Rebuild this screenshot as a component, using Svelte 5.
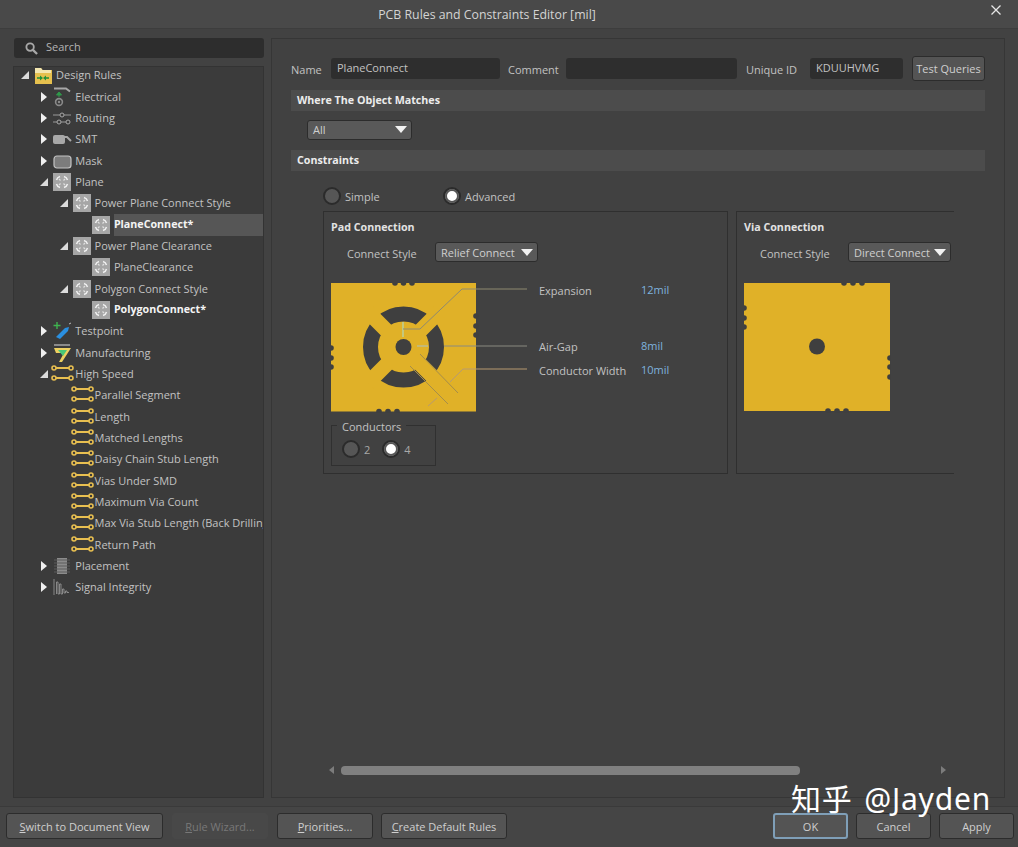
<script>
  const rows = [
    { d: 0, label: 'Design Rules', icon: 'folder', open: true },
    { d: 1, label: 'Electrical', icon: 'electrical', open: false },
    { d: 1, label: 'Routing', icon: 'routing', open: false },
    { d: 1, label: 'SMT', icon: 'smt', open: false },
    { d: 1, label: 'Mask', icon: 'mask', open: false },
    { d: 1, label: 'Plane', icon: 'plane', open: true },
    { d: 2, label: 'Power Plane Connect Style', icon: 'plane', open: true },
    { d: 3, label: 'PlaneConnect*', icon: 'plane', bold: true, selected: true },
    { d: 2, label: 'Power Plane Clearance', icon: 'plane', open: true },
    { d: 3, label: 'PlaneClearance', icon: 'plane' },
    { d: 2, label: 'Polygon Connect Style', icon: 'plane', open: true },
    { d: 3, label: 'PolygonConnect*', icon: 'plane', bold: true },
    { d: 1, label: 'Testpoint', icon: 'testpoint', open: false },
    { d: 1, label: 'Manufacturing', icon: 'manufacturing', open: false },
    { d: 1, label: 'High Speed', icon: 'bus', open: true },
    { d: 2, label: 'Parallel Segment', icon: 'bus' },
    { d: 2, label: 'Length', icon: 'bus' },
    { d: 2, label: 'Matched Lengths', icon: 'bus' },
    { d: 2, label: 'Daisy Chain Stub Length', icon: 'bus' },
    { d: 2, label: 'Vias Under SMD', icon: 'bus' },
    { d: 2, label: 'Maximum Via Count', icon: 'bus' },
    { d: 2, label: 'Max Via Stub Length (Back Drilling)', icon: 'bus' },
    { d: 2, label: 'Return Path', icon: 'bus' },
    { d: 1, label: 'Placement', icon: 'placement', open: false },
    { d: 1, label: 'Signal Integrity', icon: 'signal', open: false }
  ];

  const padNotches = [
    [395, 283], [403.5, 283], [412, 283],
    [379, 411.5], [388, 411.5], [397, 411.5],
    [331, 348], [331, 358], [331, 367],
    [476, 316], [476, 326], [476, 335]
  ];
  const viaNotches = [
    [844, 283], [853, 283], [862, 283],
    [828, 411], [837, 411], [846, 411],
    [744, 308], [744, 318], [744, 327],
    [890, 358], [890, 367], [890, 377]
  ];
</script>

{#snippet icon(name)}
  <svg class="icon" viewBox="0 0 18 18" width="18" height="18">
    {#if name === 'folder'}
      <path d="M1 2h6l1.500 2H18v14H1z" fill="#e6c04e" />
      <path d="M1 2h6l1.500 2H17v3H1z" fill="#f3e6b0" />
      <path d="M3 12h4M15 12h-4" stroke="#1f8f3a" stroke-width="1.600" />
      <path d="M9 12l-3-2.500v5zM9 12l3-2.500v5z" fill="#1f8f3a" />
    {:else if name === 'electrical'}
      <path d="M1 0.500h12l4 3" fill="none" stroke="#a8a8a8" stroke-width="2" />
      <path d="M6 9V6M3.500 7l2.500-3 2.500 3z" fill="#2f9a4a" stroke="#2f9a4a" />
      <circle cx="6" cy="14" r="3.400" fill="none" stroke="#8a8a8a" stroke-width="1.600" />
      <circle cx="6" cy="14" r="1.200" fill="#8a8a8a" />
    {:else if name === 'routing'}
      <path d="M0 6h7M11 6h7M0 13h4M8 13h5" stroke="#9a9a9a" stroke-width="1" />
      <circle cx="9" cy="6" r="2" fill="none" stroke="#a8a8a8" />
      <circle cx="6" cy="13" r="2" fill="none" stroke="#a8a8a8" />
      <circle cx="15" cy="13" r="2" fill="none" stroke="#a8a8a8" />
    {:else if name === 'smt'}
      <rect x="0" y="5" width="12" height="9" rx="2" fill="#a8a8a8" />
      <path d="M11 7h3l4 4" fill="none" stroke="#a8a8a8" stroke-width="2" />
    {:else if name === 'mask'}
      <rect x="1" y="4" width="17" height="12" rx="3" fill="#7c7c7c" stroke="#c4c4c4" stroke-width="1.200" />
    {:else if name === 'plane'}
      <rect width="18" height="18" fill="#a6a6a6" />
      <path d="M7 3.500a5 5 0 0 0-3.500 3.500M11 3.500a5 5 0 0 1 3.500 3.500M3.500 11a5 5 0 0 0 3.500 3.500M14.500 11a5 5 0 0 1-3.500 3.500" fill="none" stroke="#f0f0f0" stroke-width="1.500" />
      <path d="M7.500 7.500l-1.500-1.500M10.500 7.500l1.500-1.500M7.500 10.500l-1.500 1.500M10.500 10.500l1.500 1.500" stroke="#e0e0e0" stroke-width="1.200" />
    {:else if name === 'testpoint'}
      <path d="M3 15l9-9 4-1-1 4-8 8z" fill="#2a8fe0" />
      <path d="M4 0v7M0.500 3.500h7" stroke="#3fb34f" stroke-width="1.400" />
      <path d="M16 2l2-1" stroke="#bbb" />
    {:else if name === 'manufacturing'}
      <path d="M1 1h16" stroke="#8a8a8a" stroke-width="2" />
      <path d="M1 4h17l-9 14H6l5-9H3z" fill="#edd060" />
      <path d="M5 6h9l-4 6z" fill="#48c878" />
    {:else if name === 'bus'}
      <path d="M1 3h17M1 13h17" stroke="#e8bf50" stroke-width="2" />
      <circle cx="1" cy="3" r="2" fill="#3b3b3b" stroke="#e8bf50" stroke-width="1.600" />
      <circle cx="18" cy="3" r="2" fill="#3b3b3b" stroke="#e8bf50" stroke-width="1.600" />
      <circle cx="1" cy="13" r="2" fill="#3b3b3b" stroke="#e8bf50" stroke-width="1.600" />
      <circle cx="18" cy="13" r="2" fill="#3b3b3b" stroke="#e8bf50" stroke-width="1.600" />
    {:else if name === 'placement'}
      <rect x="4" y="1" width="10" height="16" fill="#8c8c8c" />
      <path d="M1 3h16M1 6h16M1 9h16M1 12h16M1 15h16" stroke="#5c5c5c" stroke-width="1" />
    {:else if name === 'signal'}
      <path d="M1 1v16M3.500 16V4h1.500v12h1.500V6h1.500v10h1.500v-5h1.500v4h1.500v-2h1.500v1.500h2" fill="none" stroke="#9c9c9c" stroke-width="0.800" />
    {/if}
  </svg>
{/snippet}

{#snippet radio(on)}
  <span class="radio" class:on></span>
{/snippet}

{#snippet caret()}
  <svg class="caret" viewBox="0 0 12 7" width="12" height="7"><path d="M0 0h12L6 7z" fill="#f2f2f2" /></svg>
{/snippet}

<div class="dialog">
  <header class="title">
    <span>PCB Rules and Constraints Editor [mil]</span>
    <svg class="close" viewBox="0 0 10 10" width="10" height="10"><path d="M0.500 0.500l9 9M9.500 0.500l-9 9" stroke="#e6e6e6" stroke-width="1.300" /></svg>
  </header>

  <div class="main">
    <aside class="left">
      <div class="search">
        <svg viewBox="0 0 14 14" width="13" height="13"><circle cx="5.500" cy="5.500" r="4" fill="none" stroke="#a8a8a8" stroke-width="2" /><path d="M8.500 8.500l4.500 4.500" stroke="#a8a8a8" stroke-width="2.400" /></svg>
        <span>Search</span>
      </div>
      <div class="tree">
        {#each rows as row}
          <div class="row" style="padding-left: {row.d * 19.3 + 2}px">
            <span class="arrow">
              {#if row.open === true}
                <svg viewBox="0 0 8 8" width="8" height="8"><path d="M8 0v8H0z" fill="#dcdcdc" /></svg>
              {:else if row.open === false}
                <svg viewBox="0 0 6 10" width="6" height="10"><path d="M0 0l6 5-6 5z" fill="#efefef" /></svg>
              {/if}
            </span>
            {@render icon(row.icon)}
            <span class="label" class:bold={row.bold} class:selected={row.selected}>{row.label}</span>
          </div>
        {/each}
      </div>
    </aside>

    <section class="right">
      <div class="form-row">
        <span class="lbl name">Name</span>
        <span class="input w-name">PlaneConnect</span>
        <span class="lbl comment">Comment</span>
        <span class="input w-comment"></span>
        <span class="lbl uid">Unique ID</span>
        <span class="input w-uid">KDUUHVMG</span>
        <button class="btn test">Test Queries</button>
      </div>

      <h3 class="section first">Where The Object Matches</h3>
      <div class="select all">All {@render caret()}</div>
      <h3 class="section second">Constraints</h3>

      <div class="mode">
        <label class="simple">{@render radio(false)} Simple</label>
        <label>{@render radio(true)} Advanced</label>
      </div>

      <div class="viewport">
        <div class="panels">
          <div class="panel pad">
            <h4>Pad Connection</h4>
            <div class="style-row">
              <span>Connect Style</span>
              <div class="select style">Relief Connect {@render caret()}</div>
            </div>
            <div class="diagram">
              <svg viewBox="331 283 200 130" width="200" height="130">
                <rect x="331" y="283" width="145" height="128.500" fill="#e0b128" />
                {#each padNotches as [cx, cy]}
                  <circle {cx} {cy} r="2.800" fill="#3f3f3f" />
                {/each}
                <circle cx="403.500" cy="347" r="33" fill="none" stroke="#3f3f3f" stroke-width="15" />
                <path d="M368 312l71 71M439 312l-71 71" stroke="#e0b128" stroke-width="15" />
                <circle cx="403.500" cy="347" r="8" fill="#3f3f3f" />
                <path d="M420 354l38 39M410 366l38 38" stroke="#a58d4a" stroke-width="1" fill="none" />
                <path d="M403 322v15" stroke="#bcd09a" stroke-width="1.500" />
                <path d="M403 329h17l42-40h65" stroke="#8f8a70" stroke-width="1" fill="none" />
                <path d="M417 346h11" stroke="#bcbc90" stroke-width="1.500" />
                <path d="M444 346h83" stroke="#8a8a80" stroke-width="1" />
                <path d="M428 406l9-8M450 382l13-13h64" stroke="#b89a70" stroke-width="1" fill="none" />
              </svg>
              <span class="dim d1">Expansion</span><span class="val d1">12mil</span>
              <span class="dim d2">Air-Gap</span><span class="val d2">8mil</span>
              <span class="dim d3">Conductor Width</span><span class="val d3">10mil</span>
            </div>
            <div class="conductors">
              <span class="legend">Conductors</span>
              <label>{@render radio(false)} 2</label>
              <label>{@render radio(true)} 4</label>
            </div>
          </div>

          <div class="panel via">
            <h4>Via Connection</h4>
            <div class="style-row">
              <span>Connect Style</span>
              <div class="select style">Direct Connect {@render caret()}</div>
            </div>
            <div class="diagram">
              <svg viewBox="744 283 147 130" width="147" height="130">
                <rect x="744" y="283" width="146" height="128" fill="#e0b128" />
                {#each viaNotches as [cx, cy]}
                  <circle {cx} {cy} r="2.800" fill="#3f3f3f" />
                {/each}
                <circle cx="817" cy="346.500" r="8" fill="#3f3f3f" />
              </svg>
            </div>
          </div>
        </div>
      </div>

      <div class="scrollbar">
        <svg viewBox="0 0 5 8" width="5" height="8"><path d="M5 0v8L0 4z" fill="#7c7c7c" /></svg>
        <div class="track"><div class="thumb"></div></div>
        <svg viewBox="0 0 5 8" width="5" height="8"><path d="M0 0v8l5-4z" fill="#7c7c7c" /></svg>
      </div>
    </section>
  </div>

  <footer class="footer">
    <button class="btn doc"><u>S</u>witch to Document View</button>
    <button class="btn wizard" disabled><u>R</u>ule Wizard...</button>
    <button class="btn prio"><u>P</u>riorities...</button>
    <button class="btn create"><u>C</u>reate Default Rules</button>
    <span class="spacer"></span>
    <button class="btn action ok">OK</button>
    <button class="btn action">Cancel</button>
    <button class="btn action">Apply</button>
  </footer>

  <div class="watermark">知乎 @Jayden</div>
</div>

<style>
  :global(body) {
    margin: 0;
    background: #444;
  }

  .dialog {
    position: relative;
    width: 1018px;
    height: 847px;
    display: flex;
    flex-direction: column;
    overflow: hidden;
    background: #454545;
    color: #c2c2c2;
    font-family: "Open Sans", "Noto Sans", sans-serif;
    font-size: 11px;
  }

  .title {
    flex: none;
    height: 28px;
    padding-right: 44px;
    display: flex;
    align-items: center;
    justify-content: center;
    background: #494949;
    border-bottom: 1px solid #3d3d3d;
    font-size: 12.300px;
    color: #d4d4d4;
  }

  .close {
    position: absolute;
    right: 17px;
    top: 5px;
  }

  .main {
    flex: 1;
    min-height: 0;
    display: flex;
    padding: 9px 0 8px 13px;
    gap: 7px;
    background: #424242;
  }

  .left {
    width: 251px;
    display: flex;
    flex-direction: column;
    gap: 8px;
  }

  .search {
    height: 20px;
    margin-left: 1px;
    display: flex;
    align-items: center;
    gap: 8px;
    padding-left: 11px;
    background: #2d2d2d;
    border-radius: 3px;
    color: #b4b4b4;
  }

  .search span {
    padding-bottom: 3px;
  }

  .tree {
    flex: 1;
    min-height: 0;
    overflow: hidden;
    background: #3b3b3b;
    border: 1px solid #333;
  }

  .row {
    height: 21.330px;
    display: flex;
    align-items: center;
    white-space: nowrap;
  }

  .row:first-child {
    margin-top: -2.200px;
  }

  .arrow {
    flex: none;
    width: 18px;
    display: flex;
    justify-content: center;
  }

  .icon {
    flex: none;
    overflow: visible;
  }

  .label {
    flex: 1;
    margin-left: 4px;
    line-height: 21px;
    padding-bottom: 1px;
  }

  .bold {
    font-size: 10.700px;
    font-weight: 700;
    color: #f4f4f4;
  }

  .selected {
    background: #565656;
  }

  .right {
    width: 734px;
    box-sizing: border-box;
    padding: 17px 19px 0 19px;
    background: #414141;
    border: 1px solid #363636;
  }

  .form-row {
    height: 25px;
    display: flex;
    align-items: center;
  }

  .lbl {
    flex: none;
    padding-top: 2px;
  }

  .name { width: 40px; }
  .comment { width: 58px; margin-left: 8px; }
  .uid { width: 64px; margin-left: 9px; }

  .input {
    flex: none;
    box-sizing: border-box;
    height: 21px;
    padding: 0 6px;
    line-height: 20px;
    background: #2e2e2e;
    border-radius: 3px;
  }

  .w-name { width: 169px; }
  .w-comment { width: 171px; }
  .w-uid { width: 93px; }

  .btn {
    box-sizing: border-box;
    height: 25px;
    padding: 0;
    background: #545454;
    border: 1px solid #2c2c2c;
    border-radius: 3px;
    color: #cfcfcf;
    font: inherit;
  }

  .test {
    width: 73px;
    margin-left: 9px;
  }

  .section {
    height: 21px;
    margin: 9px 0 0;
    padding-left: 6px;
    background: #4c4c4c;
    font-size: 10.700px;
    font-weight: 700;
    line-height: 21px;
    color: #ececec;
  }

  .section.second {
    margin-top: 10px;
  }

  .select {
    box-sizing: border-box;
    height: 20px;
    display: flex;
    align-items: center;
    justify-content: space-between;
    padding: 0 4px 0 5px;
    background: #595959;
    border: 1px solid #2c2c2c;
    border-radius: 3px;
    color: #cfcfcf;
    white-space: nowrap;
  }

  .select.all {
    width: 105px;
    margin: 9px 0 0 16px;
    padding-bottom: 1px;
  }

  .mode {
    height: 20px;
    margin-top: 15px;
    margin-left: 32px;
    display: flex;
    align-items: center;
  }

  .mode label {
    display: flex;
    align-items: center;
    gap: 4px;
  }

  .mode .simple {
    width: 120px;
  }

  .radio {
    flex: none;
    box-sizing: border-box;
    display: inline-block;
    width: 18px;
    height: 18px;
    border-radius: 50%;
    background: #565656;
    border: 2px solid #2b2b2b;
  }

  .radio.on {
    background: #fff;
    box-shadow: inset 0 0 0 2px #565656;
    background-clip: padding-box;
  }

  .viewport {
    width: 631px;
    height: 550px;
    margin: 5px 0 0 32px;
    overflow: hidden;
  }

  .panels {
    display: flex;
    gap: 8px;
    width: 900px;
  }

  .panel {
    flex: none;
    box-sizing: border-box;
    width: 405px;
    height: 263px;
    padding: 7px 7px 0;
    border: 1px solid #2f2f2f;
  }

  .panel h4 {
    margin: 0;
    font-size: 10.700px;
    line-height: 16px;
    font-weight: 700;
    color: #e2e2e2;
  }

  .style-row {
    margin-top: 7px;
    height: 20px;
    display: flex;
    align-items: center;
    padding-left: 16px;
  }

  .style-row > span {
    width: 88px;
    padding-top: 2px;
  }

  .select.style {
    width: 103px;
  }

  .diagram {
    position: relative;
    height: 130px;
    margin-top: 21px;
  }

  .diagram svg {
    display: block;
  }

  .dim, .val {
    position: absolute;
    line-height: 16px;
  }

  .dim { left: 208px; }
  .val { left: 310px; color: #7fb2de; }

  .dim.d1 { top: 0; }
  .val.d1 { top: -1px; }
  .dim.d2 { top: 56px; }
  .val.d2 { top: 55px; }
  .dim.d3 { top: 80px; }
  .val.d3 { top: 79px; }

  .conductors {
    position: relative;
    box-sizing: border-box;
    width: 105px;
    height: 41px;
    margin-top: 12px;
    padding: 14px 0 0 10px;
    display: flex;
    align-items: flex-start;
    gap: 12px;
    border: 1px solid #303030;
  }

  .conductors label {
    display: flex;
    align-items: center;
    gap: 4px;
    color: #a8a8a8;
  }

  .legend {
    position: absolute;
    left: 5px;
    top: -7px;
    padding: 0 5px;
    background: #414141;
    line-height: 16px;
  }

  .scrollbar {
    width: 631px;
    margin: 4px 0 0 32px;
    height: 10px;
    box-sizing: border-box;
    padding: 0 8px 0 6px;
    display: flex;
    align-items: center;
    gap: 7px;
  }

  .track {
    flex: 1;
  }

  .thumb {
    width: 459px;
    height: 9px;
    border-radius: 4px;
    background: #808080;
  }

  .footer {
    flex: none;
    height: 41px;
    box-sizing: border-box;
    display: flex;
    align-items: center;
    gap: 9px;
    padding: 0 4px 2px 6px;
    background: #454545;
    border-top: 1px solid #3a3a3a;
  }

  .footer .btn {
    height: 26px;
  }

  .doc { width: 157px; }
  .wizard { width: 96px; background: #484848; border-color: #484848; color: #787878; }
  .prio { width: 96px; margin-left: 0; }
  .create { width: 126px; margin-left: -1px; }
  .spacer { flex: 1; }
  .footer .action { width: 75px; margin-left: -1px; }
  .footer .ok { border: 2px solid #7f9fb8; }

  .watermark {
    position: absolute;
    left: 791px;
    top: 778px;
    color: #fff;
    font-family: "Noto Sans", "Noto Sans CJK SC", sans-serif;
    font-size: 30px;
    letter-spacing: 0.800px;
    word-spacing: 3px;
    line-height: 42px;
    white-space: nowrap;
  }
</style>
